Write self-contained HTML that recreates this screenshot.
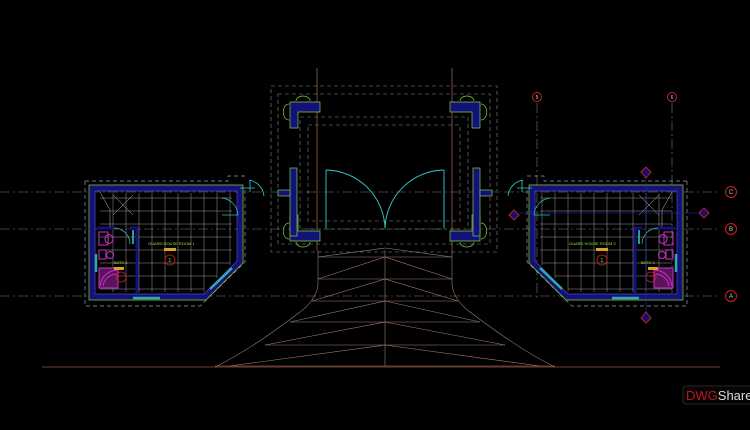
<!DOCTYPE html>
<html><head><meta charset="utf-8"><style>
html,body{margin:0;padding:0;background:#000;width:750px;height:430px;overflow:hidden}
svg{display:block}
text{font-family:"Liberation Sans",sans-serif}
</style></head><body>
<svg width="750" height="430" viewBox="0 0 750 430" xmlns="http://www.w3.org/2000/svg">
<defs>
<g id="room">
  <path d="M85 181 H228 V176 H245 M85 181 V306 H200 L245 262 V190" fill="none" stroke="#999" stroke-width="0.7" stroke-dasharray="4 3"/>
  <path d="M92 188 H240 V262 L205 297 H92 Z" fill="none" stroke="#12127a" stroke-width="5"/>
  <path d="M89 185 H243 V263 L206 300 H89 Z" fill="none" stroke="#8fd23a" stroke-width="0.7"/>
  <path d="M95 191 H237 V261 L204 294 H95 Z" fill="none" stroke="#5a4ad0" stroke-width="0.7"/>
  <g stroke="#aaa" stroke-width="0.45">
    <path d="M100 198 H232 M100 211 H232 M100 224 H232 M100 237 H232 M100 250 H232 M100 263 H230 M100 276 H217 M100 289 H204"/>
    <path d="M113 193 V292 M126 193 V292 M139 193 V292 M152 193 V292 M165 193 V292 M178 193 V292 M191 193 V292 M204 193 V292 M217 193 V278 M230 193 V265"/>
  </g>
  <path d="M97 228 H114 M130 228 H137 V293" stroke="#12127a" stroke-width="3" fill="none"/>
  <path d="M114 228 A16 16 0 0 1 130 244" stroke="#3cc" stroke-width="0.7" fill="none"/>
  <path d="M133 230 V244" stroke="#3cc" stroke-width="1.5"/>
  <path d="M100 192 L110 210 V227 M113 195 L133 215 M133 195 L113 215" stroke="#bbb" stroke-width="0.5" fill="none"/>
  <g stroke="#d030d0" stroke-width="1" fill="none">
    <rect x="99" y="232" width="9" height="13"/><ellipse cx="109" cy="239" rx="4" ry="4.5"/>
    <rect x="99" y="250" width="7" height="9"/><circle cx="110" cy="255" r="3.5"/>
    <rect x="99" y="268" width="19" height="20" fill="#5a145a"/>
    <path d="M100 286 A18 18 0 0 1 117 270 M103 286 A14 14 0 0 1 116 274"/>
  </g>
  <path d="M96 254 V272" stroke="#3aa" stroke-width="2.5"/>
  <path d="M133 298 H160" stroke="#3aa" stroke-width="2.5"/>
  <path d="M210 289 L232 268" stroke="#3aa" stroke-width="2.5"/>
  <path d="M222 198 A18 18 0 0 1 238 215" stroke="#3cc" stroke-width="0.7" fill="none"/>
  <path d="M222 215 H238" stroke="#3cc" stroke-width="0.7"/>
  <path d="M240 188 H255 M249 180 A18 18 0 0 1 264 196 M250 180 V192" stroke="#3cc" stroke-width="0.8" fill="none"/>
  <rect x="164" y="248" width="12" height="3" fill="#e0a020"/>
  <circle cx="170" cy="260" r="5" fill="none" stroke="#d02020" stroke-width="0.8"/>
  <rect x="114" y="267" width="10" height="3" fill="#e0a020"/>
  <circle cx="121" cy="277" r="5" fill="none" stroke="#d02020" stroke-width="0.8"/>
</g>
<g id="post">
  <path d="M290 102 H320 V112 H298 V128 H290 Z" fill="#12127a" stroke="#7fd040" stroke-width="0.7"/>
  <path d="M296 101 A7 5 0 0 1 310 101 M289 104 A5 7 0 0 0 289 120" fill="none" stroke="#7fd040" stroke-width="0.7"/>
</g>
</defs>

<g stroke="#7a7a7a" stroke-width="0.6" stroke-dasharray="10 3 2 3">
  <path d="M0 192 H718 M0 229 H718 M0 296 H718"/>
  <path d="M537 103 V300 M672 103 V300"/>
</g>
<g stroke="#a07050" stroke-width="0.7">
  <path d="M317 68 V250 M452 68 V250"/>
</g>
<path d="M42 367 H720" stroke="#a04a3a" stroke-width="0.8"/>
<g fill="none" stroke="#d02020" stroke-width="1">
  <circle cx="731" cy="192" r="5.5"/><circle cx="731" cy="229" r="5.5"/><circle cx="731" cy="296" r="5.5"/>
  <circle cx="537" cy="97" r="4.5"/><circle cx="672" cy="97" r="4.5"/>
</g>
<g font-size="6" fill="#ccc" text-anchor="middle">
  <text x="731" y="194">C</text><text x="731" y="231">B</text><text x="731" y="298">A</text>
  <text x="537" y="99" font-size="5">5</text><text x="672" y="99" font-size="5">6</text>
</g>

<g fill="none" stroke="#a08070" stroke-width="0.6">
  <path d="M318 250 V285 Q316 300 300 312 Q250 350 215 367"/>
  <path d="M452 250 V285 Q454 300 470 312 Q520 350 555 367"/>
  <path d="M318 257 H452 M318 279 H452 M312 301 H458 M290 322 H480 M265 345 H505 M215 366 H555"/>
  <path d="M385 250 V366"/>
  <path d="M318 257 L385 248 L452 257 M318 279 L385 257 L452 279 M312 301 L385 279 L458 301 M290 322 L385 301 L480 322 M265 345 L385 322 L505 345 M230 366 L385 345 L540 366"/>
</g>

<g fill="none" stroke="#888" stroke-width="0.6" stroke-dasharray="4 3">
  <rect x="271" y="86" width="226" height="166"/>
  <rect x="278" y="94" width="212" height="150"/>
  <rect x="300" y="117" width="168" height="112"/>
  <rect x="308" y="125" width="152" height="96"/>
</g>
<use href="#post"/>
<use href="#post" transform="translate(770 0) scale(-1 1)"/>
<use href="#post" transform="translate(0 343) scale(1 -1)"/>
<use href="#post" transform="translate(770 343) scale(-1 -1)"/>
<g fill="#12127a" stroke="#7fd040" stroke-width="0.7">
  <rect x="290" y="168" width="7" height="68"/><rect x="473" y="168" width="7" height="68"/>
  <rect x="278" y="190" width="12" height="6"/><rect x="480" y="190" width="12" height="6"/>
</g>
<g fill="none" stroke="#3cc" stroke-width="0.9">
  <path d="M326 170 V228 M326 170 A60 60 0 0 1 385 228"/>
  <path d="M444 170 V228 M444 170 A60 60 0 0 0 385 228"/>
</g>
<use href="#room"/>
<use href="#room" transform="translate(772 0) scale(-1 1)"/>
<g font-size="4" fill="#9be23a">
  <text x="148" y="245">GUARD HOUSE ROOM 1</text>
  <text x="168.5" y="262" font-size="5">1</text>
  <text x="114" y="264">BATH 1</text>
  <text x="569" y="245">GUARD HOUSE ROOM 2</text>
  <text x="600.5" y="262" font-size="5">1</text>
  <text x="641" y="264">BATH 2</text>
</g>
<g fill="#101070" stroke="#d02020" stroke-width="0.9">
  <path d="M641 172 L646 167 L651 172 L646 178 Z"/><path d="M641 318 L646 312 L651 318 L646 323 Z"/>
  <path d="M509 215 L514 210 L519 215 L514 220 Z"/><path d="M699 213 L704 208 L709 213 L704 218 Z"/>
</g>
<path d="M519 213 H699 M646 178 V312" stroke="#2030b0" stroke-width="0.6"/>

<rect x="683" y="386" width="70" height="18" rx="3" fill="#050505" stroke="#333" stroke-width="0.8"/>
<text x="686" y="400" font-size="13" fill="#c0161c">DWG<tspan fill="#ddd">Share</tspan></text>
</svg>
</body></html>
